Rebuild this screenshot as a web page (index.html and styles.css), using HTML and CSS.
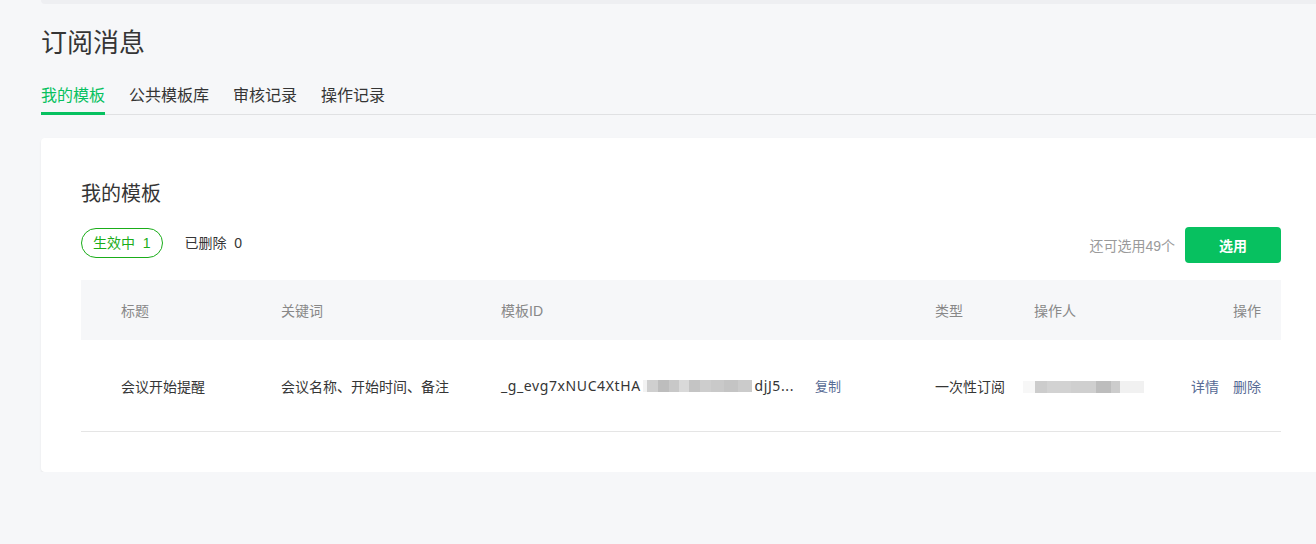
FILE: index.html
```html
<!DOCTYPE html>
<html lang="zh-CN">
<head>
<meta charset="utf-8">
<title>订阅消息</title>
<link rel="stylesheet" href="styles.css">
</head>
<body>
<div class="topbar"></div>
<main class="page">
  <h1 class="page-title">订阅消息</h1>
  <nav class="tabs">
    <a class="tab active">我的模板</a>
    <a class="tab">公共模板库</a>
    <a class="tab">审核记录</a>
    <a class="tab">操作记录</a>
  </nav>
  <section class="card">
    <h2 class="card-title">我的模板</h2>
    <div class="toolbar">
      <div class="filters">
        <span class="pill active">生效中&nbsp;&nbsp;1</span>
        <span class="pill">已删除&nbsp;&nbsp;0</span>
      </div>
      <div class="actions">
        <span class="quota">还可选用49个</span>
        <button class="btn-primary">选用</button>
      </div>
    </div>
    <div class="table">
      <div class="row head">
        <div class="cell">标题</div>
        <div class="cell">关键词</div>
        <div class="cell">模板ID</div>
        <div class="cell">类型</div>
        <div class="cell">操作人</div>
        <div class="cell right">操作</div>
      </div>
      <div class="row body">
        <div class="cell">会议开始提醒</div>
        <div class="cell">会议名称、开始时间、备注</div>
        <div class="cell idcell">
          <span class="tpl-id">_g_evg7xNUC4XtHA<span class="mosaic id-mosaic"></span>djJ5...</span>
          <a class="link copy">复制</a>
        </div>
        <div class="cell">一次性订阅</div>
        <div class="cell"><span class="mosaic op-mosaic"></span></div>
        <div class="cell right"><a class="link">详情</a><a class="link">删除</a></div>
      </div>
    </div>
  </section>
</main>
</body>
</html>
```
FILE: styles.css
```css
* { box-sizing: border-box; }
html, body { margin: 0; padding: 0; }
body {
  background: #f6f7f9;
  font-family: "Liberation Sans", "Noto Sans CJK SC", sans-serif;
  font-size: 14px;
  color: #353535;
  overflow: hidden;
}
.topbar {
  height: 4px;
  margin-left: 41px;
  background: #eeeff2;
  border-bottom-left-radius: 4px;
}
.page {
  padding-left: 41px;
}
.page-title {
  margin: 0;
  padding-top: 21px;
  font-size: 26px;
  line-height: 36px;
  font-weight: normal;
  color: #353535;
}
.tabs {
  display: flex;
  gap: 24px;
  margin-top: 24px;
  border-bottom: 1px solid #e0e1e3;
}
.tab {
  font-size: 16px;
  line-height: 22px;
  padding-bottom: 5px;
  color: #353535;
  border-bottom: 3px solid transparent;
  margin-bottom: -1px;
}
.tab.active {
  color: #07c160;
  border-bottom-color: #07c160;
}
.card {
  margin-top: 23px;
  background: #fff;
  border-radius: 4px 0 0 4px;
  box-shadow: 0 1px 2px rgba(0,0,0,0.08);
  padding: 40px 35px 40px 40px;
}
.card-title {
  margin: 0;
  font-size: 20px;
  line-height: 32px;
  font-weight: normal;
  color: #353535;
}
.toolbar {
  display: flex;
  justify-content: space-between;
  align-items: flex-start;
  margin-top: 17px;
}
.filters { display: flex; gap: 22px; margin-top: 1px; }
.pill {
  height: 30px;
  line-height: 28px;
  padding: 0 1px;
  font-size: 14px;
  color: #353535;
  border: 1px solid transparent;
  border-radius: 15px;
}
.pill.active {
  padding: 0 11px;
  color: #1aad19;
  border-color: #1aad19;
}
.pill + .pill { margin-left: -2px; }
.actions { display: flex; align-items: center; gap: 10px; }
.quota { color: #9a9a9a; font-size: 14px; }
.btn-primary {
  width: 96px;
  height: 36px;
  border: 0;
  border-radius: 4px;
  background: #07c160;
  color: #fff;
  font-family: inherit;
  font-size: 14px;
  font-weight: bold;
}
.table { margin-top: 17px; }
.row {
  display: grid;
  grid-template-columns: 160px 220px 434px 99px 167px 120px;
  align-items: center;
}
.row.head { height: 60px; background: #f6f7f9; color: #888; }
.row.body { height: 92px; border-bottom: 1px solid #e5e5e5; color: #353535; }
.cell { padding-left: 40px; white-space: nowrap; min-width: 0; }
.cell.right { text-align: right; padding-left: 0; padding-right: 20px; }
.idcell { display: flex; align-items: center; }
.tpl-id {
  display: inline-flex;
  align-items: center;
  width: 293px;
  flex: none;
  font-family: "Noto Sans", "Noto Sans CJK SC", sans-serif;
  letter-spacing: 0.6px;
}
.copy { margin-left: 21px; font-size: 13px; }
.link { color: #576b95; }
.row.body .right .link + .link { margin-left: 14px; }
.mosaic {
  display: inline-block;
  height: 12px;
}
.id-mosaic {
  width: 110px;
  margin: 0 2px 0 2px;
  background: linear-gradient(90deg, #f2f2f2 0 4%, #cfcfcf 4% 14%, #bdbdbd 14% 24%, #c8c8c8 24% 33%, #d9d9d9 33% 42%, #c4c4c4 42% 52%, #cdcdcd 52% 62%, #c9c9c9 62% 74%, #c4c4c4 74% 87%, #cbcbcb 87% 100%);
}
.op-mosaic {
  width: 121px;
  margin-left: -11px;
  vertical-align: middle;
  background: linear-gradient(90deg, #f7f7f7 0 10%, #cccccc 10% 20%, #d2d2d2 20% 40%, #cfcfcf 40% 60%, #bdbdbd 60% 73%, #cccccc 73% 80%, #f1f1f1 80% 100%);
}
```
